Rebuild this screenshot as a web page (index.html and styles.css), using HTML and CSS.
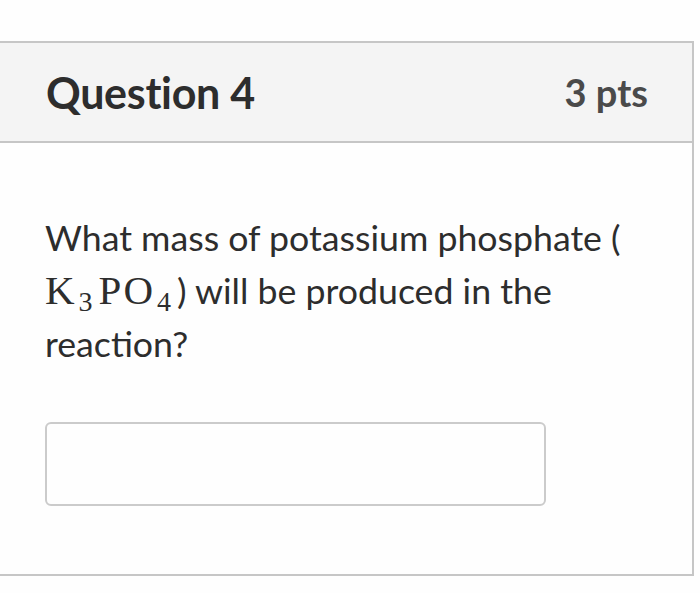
FILE: index.html
```html
<!DOCTYPE html>
<html>
<head>
<meta charset="utf-8">
<link rel="stylesheet" href="styles.css">
</head>
<body>
<div class="card">
  <div class="header">
    <h2 class="title">Question 4</h2>
    <div class="pts">3 pts</div>
  </div>
  <div class="content">
    <p class="question"><span class="line">What mass of potassium phosphate (</span><br><span class="math"><span class="mi">K</span><span class="sub">3</span><span class="mi">PO</span><span class="sub">4</span></span><span class="line">) will be produced in the</span><br><span class="line">reaction?</span></p>
    <div class="answer"></div>
  </div>
</div>
</body>
</html>
```
FILE: styles.css
```css
html, body {
  margin: 0;
  padding: 0;
  background: #fefefe;
}
body {
  padding-top: 41px;
  font-family: Lato, "Open Sans", sans-serif;
  color: #2d2d2d;
  overflow: hidden;
}
.card {
  margin-left: -20px;
  width: 710px;
  border: 2px solid #c6c6c6;
  background: #fefefe;
}
.header {
  display: flex;
  align-items: center;
  justify-content: space-between;
  height: 98px;
  padding: 0 44px 0 64px;
  background: #f4f4f4;
  border-bottom: 2px solid #c6c6c6;
}
.title {
  margin: 0;
  font-size: 43px;
  font-weight: 700;
  color: #2d2d2d;
  letter-spacing: -0.3px;
}
.pts {
  font-size: 38px;
  font-weight: 700;
  color: #4a4a4a;
}
.content {
  padding: 68px 40px 68px 63px;
}
.question {
  margin: 0;
  width: 620px;
  font-size: 35.7px;
  line-height: 53px;
  color: #2d2d2d;
}
.math {
  font-family: "Liberation Serif", "DejaVu Serif", serif;
  font-size: 41px;
  color: #2d2d2d;
}
.mi {
  letter-spacing: 2px;
}
.sub {
  display: inline-block;
  font-size: 28px;
  line-height: 28px;
  vertical-align: -7px;
  margin: 0 6px 0 2px;
}
.answer {
  margin-top: 52px;
  width: 497px;
  height: 80px;
  border: 2px solid #cbcbcb;
  border-radius: 6px;
  background: #fefefe;
}
```
